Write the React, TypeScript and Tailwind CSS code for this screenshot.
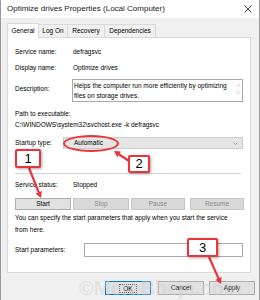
import React from 'react';

const RED = '#e8343a';

const Arrow = ({ x1, y1, x2, y2 }: { x1: number; y1: number; x2: number; y2: number }) => {
  const a = Math.atan2(y2 - y1, x2 - x1);
  const l = 7;
  const w = 0.5;
  const p1 = `${x2 - l * Math.cos(a - w)},${y2 - l * Math.sin(a - w)}`;
  const p2 = `${x2 - l * Math.cos(a + w)},${y2 - l * Math.sin(a + w)}`;
  return (
    <g>
      <line x1={x1} y1={y1} x2={x2 - 4 * Math.cos(a)} y2={y2 - 4 * Math.sin(a)} stroke={RED} strokeWidth={2.2} />
      <polygon points={`${x2},${y2} ${p1} ${p2}`} fill={RED} />
    </g>
  );
};

const Badge = ({ n, cls }: { n: string; cls: string }) => (
  <div
    className={`absolute flex items-center justify-center bg-white border-2 border-[#e8343a] rounded-[2px] shadow-[1px_1px_3px_rgba(0,0,0,0.35)] text-[13px] text-black ${cls}`}
  >
    {n}
  </div>
);

const Btn = ({ label, cls, disabled }: { label: string; cls: string; disabled?: boolean }) => (
  <div
    className={`h-[12px] flex items-center justify-center border ${
      disabled ? 'bg-[#d9d9d9] border-[#c6c6c6] text-[#8a8a8a]' : 'bg-[#e1e1e1] border-[#adadad] text-black'
    } ${cls}`}
  >
    {label}
  </div>
);

export default function App() {
  return (
    <div
      className="relative w-[260px] h-[300px] overflow-hidden bg-[#f0f0f0] border-x border-[#9a9a9a] text-[6.5px] leading-[10px] text-black"
      style={{ fontFamily: '"Liberation Sans", Arial, sans-serif' }}
    >
      {/* title bar */}
      <div className="h-[18px] bg-white flex items-center justify-between pl-[6px] pr-[6px]">
        <span className="text-[8px] text-[#1a1a1a]">Optimize drives Properties (Local Computer)</span>
        <svg width="8" height="8" viewBox="0 0 8 8" className="mr-[1px]">
          <path d="M0.5 0.5L7.5 7.5M7.5 0.5L0.5 7.5" stroke="#333" strokeWidth="0.9" />
        </svg>
      </div>

      {/* tabs */}
      <div className="flex items-end pl-[6px] h-[19px]">
        <div className="h-[15px] w-[32px] bg-white border-x border-t border-[#d9d9d9] flex items-start pt-[2px] justify-center relative z-10 mb-[-1px]">
          General
        </div>
        <div className="h-[13px] w-[29px] border-t border-r border-[#d9d9d9] flex items-center justify-center">Log On</div>
        <div className="h-[13px] w-[37px] border-t border-r border-[#d9d9d9] flex items-center justify-center">Recovery</div>
        <div className="h-[13px] w-[51px] border-t border-r border-[#d9d9d9] flex items-center justify-center">Dependencies</div>
      </div>

      {/* panel */}
      <div className="ml-[6px] w-[244px] h-[236px] bg-white border border-[#d9d9d9] pl-[7px] pt-[9px]">
        <div className="flex">
          <span className="w-[58px]">Service name:</span>
          <span>defragsvc</span>
        </div>
        <div className="flex mt-[6px]">
          <span className="w-[58px]">Display name:</span>
          <span>Optimize drives</span>
        </div>
        <div className="flex mt-[6px]">
          <span className="w-[57px] pt-[5px]">Description:</span>
          <div className="w-[171px] h-[23px] border border-[#a9a9a9] flex">
            <div className="flex-1 pl-[1px] pt-[1px] leading-[9.5px]">
              Helps the computer run more efficiently by optimizing files on storage drives.
            </div>
            <div className="w-[8px] flex flex-col items-center pt-[4px] gap-[4px]">
              <svg width="5" height="3" viewBox="0 0 5 3">
                <path d="M0.5 2.5L2.5 0.5L4.5 2.5" stroke="#b5b5b5" strokeWidth="0.7" fill="none" />
              </svg>
              <svg width="5" height="3" viewBox="0 0 5 3">
                <path d="M0.5 0.5L2.5 2.5L4.5 0.5" stroke="#b5b5b5" strokeWidth="0.7" fill="none" />
              </svg>
            </div>
          </div>
        </div>
        <div className="mt-[7px]">Path to executable:</div>
        <div className="mt-[1px]">C:\WINDOWS\system32\svchost.exe -k defragsvc</div>
        <div className="flex mt-[7px] items-center">
          <span className="w-[48px]">Startup type:</span>
          <div className="w-[180px] h-[12px] bg-[#e5e5e5] border border-[#cccccc] flex items-center justify-between pl-[10px] pr-[4px]">
            <span>Automatic</span>
            <svg width="5" height="3" viewBox="0 0 5 3">
              <path d="M0.5 0.5L2.5 2.5L4.5 0.5" stroke="#777" strokeWidth="0.7" fill="none" />
            </svg>
          </div>
        </div>
        <div className="mt-[24px] w-[226px] h-px bg-[#d4d4d4]" />
        <div className="flex mt-[6px]">
          <span className="w-[58px]">Service status:</span>
          <span>Stopped</span>
        </div>
        <div className="flex mt-[8px]">
          <Btn label="Start" cls="w-[56px]" />
          <Btn label="Stop" cls="w-[56px] ml-[2px]" disabled />
          <Btn label="Pause" cls="w-[54px] ml-[2px]" disabled />
          <Btn label="Resume" cls="w-[54px] ml-[5px]" disabled />
        </div>
        <div className="leading-[12px] mt-[2px]">
          You can specify the start parameters that apply when you start the service
          <br />
          from here.
        </div>
        <div className="flex items-center mt-[7px]">
          <span className="w-[69px]">Start parameters:</span>
          <div className="w-[159px] h-[14px] bg-white border border-[#a9a9a9]" />
        </div>
      </div>

      {/* footer buttons */}
      <div className="flex mt-[8px] pl-[104px]">
        <div className="w-[46px] h-[14px] border border-[#0078d7] bg-[#e1e1e1] flex items-center justify-center">
          <span className="border border-dotted border-[#555] px-[3px] leading-[7px]">OK</span>
        </div>
        <div className="w-[46px] h-[14px] ml-[7px] border border-[#adadad] bg-[#e1e1e1] flex items-center justify-center">Cancel</div>
        <div className="w-[46px] h-[14px] ml-[5px] border border-[#adadad] bg-[#e1e1e1] flex items-center justify-center">Apply</div>
      </div>

      {/* watermark */}
      <div className="absolute left-[78px] top-[278px] text-[20px] font-bold leading-[20px] text-[#cfcfcf] opacity-40 pointer-events-none whitespace-nowrap">
        ©MeraBheja.com
      </div>

      {/* annotations */}
      <div className="absolute left-[62px] top-[135px] w-[56px] h-[17px] rounded-[50%] border-2 border-[#e8343a]" />
      <svg className="absolute left-0 top-0 pointer-events-none" width="260" height="300">
        <Arrow x1={28} y1={168} x2={40} y2={198} />
        <Arrow x1={128} y1={161} x2={113} y2={151} />
        <Arrow x1={208} y1={257} x2={220} y2={284} />
      </svg>
      <Badge n="1" cls="left-[14px] top-[149px] w-[26px] h-[19px]" />
      <Badge n="2" cls="left-[127px] top-[155px] w-[22px] h-[18px]" />
      <Badge n="3" cls="left-[186px] top-[238px] w-[31px] h-[19px]" />
    </div>
  );
}
